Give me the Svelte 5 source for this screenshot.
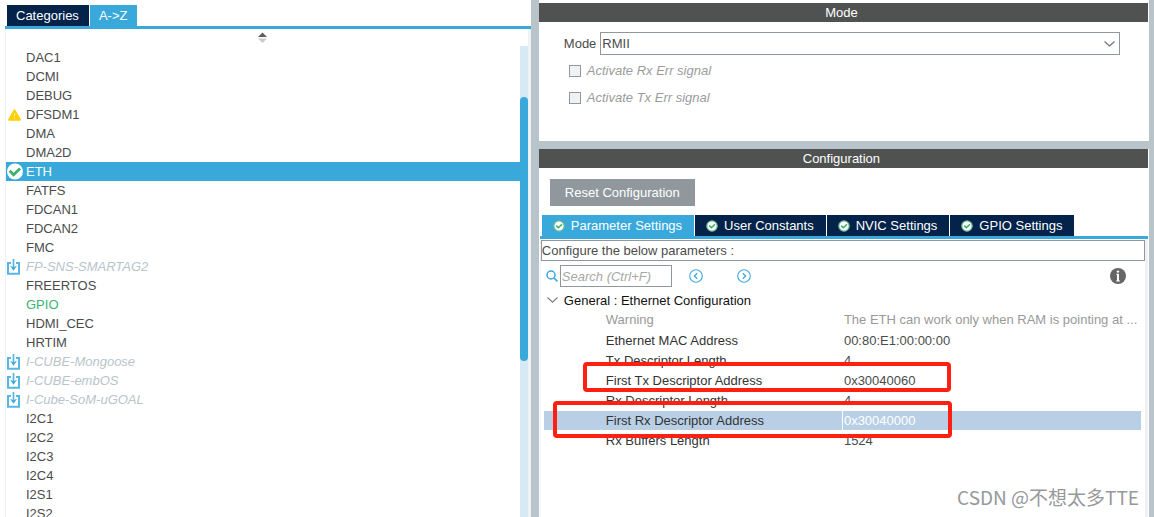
<script lang="ts">
    type Status = "none" | "warning" | "ok" | "download";

    interface Peripheral {
        name: string;
        status?: Status;
        configured?: boolean;
    }

    const peripherals: Peripheral[] = [
        { name: "DAC1" },
        { name: "DCMI" },
        { name: "DEBUG" },
        { name: "DFSDM1", status: "warning" },
        { name: "DMA" },
        { name: "DMA2D" },
        { name: "ETH", status: "ok" },
        { name: "FATFS" },
        { name: "FDCAN1" },
        { name: "FDCAN2" },
        { name: "FMC" },
        { name: "FP-SNS-SMARTAG2", status: "download" },
        { name: "FREERTOS" },
        { name: "GPIO", configured: true },
        { name: "HDMI_CEC" },
        { name: "HRTIM" },
        { name: "I-CUBE-Mongoose", status: "download" },
        { name: "I-CUBE-embOS", status: "download" },
        { name: "I-Cube-SoM-uGOAL", status: "download" },
        { name: "I2C1" },
        { name: "I2C2" },
        { name: "I2C3" },
        { name: "I2C4" },
        { name: "I2S1" },
        { name: "I2S2" },
    ];

    const listTabs = ["Categories", "A->Z"];
    const configTabs = [
        "Parameter Settings",
        "User Constants",
        "NVIC Settings",
        "GPIO Settings",
    ];
    const signals = ["Activate Rx Err signal", "Activate Tx Err signal"];

    const parameters = [
        {
            name: "Warning",
            value: "The ETH can work only when RAM is pointing at ...",
            disabled: true,
        },
        { name: "Ethernet MAC Address", value: "00:80:E1:00:00:00" },
        { name: "Tx Descriptor Length", value: "4" },
        { name: "First Tx Descriptor Address", value: "0x30040060" },
        { name: "Rx Descriptor Length", value: "4" },
        { name: "First Rx Descriptor Address", value: "0x30040000" },
        { name: "Rx Buffers Length", value: "1524" },
    ];

    let listTab = $state("A->Z");
    let configTab = $state("Parameter Settings");
    let selected = $state("ETH");
    let selectedParam = $state("First Rx Descriptor Address");
    let mode = $state("RMII");
    let search = $state("");
    let open = $state(true);
</script>

<div class="app">
    <aside class="list-panel">
        <div class="tabs">
            {#each listTabs as tab}
                <button class="tab" class:active={tab === listTab} onclick={() => (listTab = tab)}>
                    {tab}
                </button>
            {/each}
        </div>

        <div class="list-body">
            <div class="list">
                <button class="sort" aria-label="Sort">
                    <svg width="9" height="11" viewBox="0 0 9 11">
                        <path d="M4.5 0.5 L9 5 H0 Z" fill="#5c5f5e" />
                        <path d="M0 6.5 H9 L4.5 11 Z" fill="#c9cbcb" />
                    </svg>
                </button>
                <ul>
                    {#each peripherals as p}
                        <li>
                            <button
                                class="item"
                                class:selected={p.name === selected}
                                class:missing={p.status === "download"}
                                class:configured={p.configured}
                                onclick={() => (selected = p.name)}
                            >
                                <span class="status">
                                    {#if p.status === "warning"}
                                        <svg width="14" height="12" viewBox="0 0 14 12">
                                            <path
                                                d="M7.5 1.2 L13 10.8 H2 Z"
                                                fill="#ffd000"
                                                stroke="#ffd000"
                                                stroke-width="1.8"
                                                stroke-linejoin="round"
                                            />
                                            <path d="M7.5 4 V7.6 M7.5 8.8 V10" stroke="#fff2b0" stroke-width="1.1" />
                                        </svg>
                                    {:else if p.status === "ok"}
                                        <svg width="16" height="17" viewBox="0 0 16 17">
                                            <circle cx="8" cy="8.5" r="8" fill="#fff" />
                                            <path d="M2.6 7.8 L6.6 11.8 L13 5.4" fill="none" stroke="#3fae6e" stroke-width="2.8" />
                                        </svg>
                                    {:else if p.status === "download"}
                                        <svg width="13" height="16" viewBox="0 0 13 16">
                                            <path d="M4 4 H1 V14.8 H12 V4 H9" fill="none" stroke="#58b7e2" stroke-width="2" />
                                            <path d="M6.5 0 V8.5" stroke="#58b7e2" stroke-width="1.7" />
                                            <path d="M3 6.8 L6.5 11.8 L10 6.8 L6.5 8.2 Z" fill="#39a9dc" />
                                        </svg>
                                    {/if}
                                </span>
                                {p.name}
                            </button>
                        </li>
                    {/each}
                </ul>
            </div>
            <div class="scrollbar"><div class="thumb"></div></div>
        </div>
    </aside>

    <main class="main">
        <section class="mode">
            <h2>Mode</h2>
            <div class="mode-body">
                <div class="mode-row">
                    <label for="mode">Mode</label>
                    <div class="select">
                        <select id="mode" bind:value={mode}>
                            <option>Disable</option>
                            <option>MII</option>
                            <option>RMII</option>
                        </select>
                        <svg width="11" height="6" viewBox="0 0 11 6">
                            <path d="M0.5 0.5 L5.5 5 L10.5 0.5" fill="none" stroke="#6d6f6f" stroke-width="1.1" />
                        </svg>
                    </div>
                </div>
                {#each signals as signal}
                    <label class="check">
                        <input type="checkbox" disabled />
                        {signal}
                    </label>
                {/each}
            </div>
        </section>

        <section class="config">
            <h2>Configuration</h2>
            <div class="config-body">
                <button class="reset">Reset Configuration</button>

                <div class="tabs config-tabs">
                    {#each configTabs as tab}
                        <button class="tab" class:active={tab === configTab} onclick={() => (configTab = tab)}>
                            <svg width="12" height="12" viewBox="0 0 12 12">
                                <circle cx="6" cy="6" r="5.2" fill="#fff" stroke="#65b98a" stroke-width="1.2" />
                                <path d="M3.2 5.6 L5.4 7.8 L9 4.2" fill="none" stroke="#3fa76d" stroke-width="1.5" />
                            </svg>
                            {tab}
                        </button>
                    {/each}
                </div>

                <div class="params">
                    <p class="hint">Configure the below parameters :</p>

                    <div class="toolbar">
                        <label class="search-icon" for="search" aria-label="Search">
                            <svg width="12" height="12" viewBox="0 0 12 12">
                                <circle cx="5" cy="5" r="4" fill="none" stroke="#39a9dc" stroke-width="1.5" />
                                <path d="M8 8 L11.4 11.4" stroke="#39a9dc" stroke-width="1.7" />
                            </svg>
                        </label>
                        <input id="search" type="text" placeholder="Search (Ctrl+F)" bind:value={search} />
                        <button class="icon" aria-label="Previous match">
                            <svg width="14" height="14" viewBox="0 0 14 14" fill="none" stroke="#39a9dc">
                                <circle cx="7" cy="7" r="6.3" stroke-width="1.1" />
                                <path d="M8.2 4.2 L5.4 7 L8.2 9.8" stroke-width="1.3" />
                            </svg>
                        </button>
                        <button class="icon next" aria-label="Next match">
                            <svg width="14" height="14" viewBox="0 0 14 14" fill="none" stroke="#39a9dc">
                                <circle cx="7" cy="7" r="6.3" stroke-width="1.1" />
                                <path d="M5.8 4.2 L8.6 7 L5.8 9.8" stroke-width="1.3" />
                            </svg>
                        </button>
                        <button class="icon info" aria-label="Information">
                            <svg width="16" height="16" viewBox="0 0 16 16">
                                <circle cx="8" cy="8" r="8" fill="#666" />
                                <path d="M6.4 6.3 H8 V12.6 M6.2 13 H9.8" fill="none" stroke="#fff" stroke-width="1.2" />
                                <path d="M8 6 V13" stroke="#fff" stroke-width="2" />
                                <circle cx="8" cy="3.6" r="1.2" fill="#fff" />
                            </svg>
                        </button>
                    </div>

                    <div class="tree">
                        <button class="group" onclick={() => (open = !open)}>
                            <svg width="11" height="6" viewBox="0 0 11 6">
                                <path d="M0.5 0.5 L5.5 5.2 L10.5 0.5" fill="none" stroke="#7b7d7d" stroke-width="1.1" />
                            </svg>
                            General : Ethernet Configuration
                        </button>
                        {#if open}
                            <table>
                                <tbody>
                                    {#each parameters as p}
                                        <tr
                                            class:disabled={p.disabled}
                                            class:selected={p.name === selectedParam}
                                            onclick={() => (selectedParam = p.name)}
                                        >
                                            <th scope="row">{p.name}</th>
                                            <td>{p.value}</td>
                                        </tr>
                                    {/each}
                                </tbody>
                            </table>
                            <div class="mark tx"></div>
                            <div class="mark rx"></div>
                        {/if}
                    </div>
                </div>
            </div>
        </section>
    </main>

    <div class="watermark">CSDN @不想太多TTE</div>
</div>

<style>
    :global(body) {
        margin: 0;
        background: #fff;
    }

    .app {
        position: relative;
        display: flex;
        height: 100vh;
        overflow: hidden;
        font-family: "Liberation Sans", Arial, sans-serif;
        font-size: 13px;
        color: #4a4c4c;
    }

    button,
    input,
    select {
        margin: 0;
        padding: 0;
        border: none;
        border-radius: 0;
        background: none;
        font: inherit;
        color: inherit;
        box-sizing: border-box;
    }

    svg {
        display: block;
        flex: none;
    }

    /* tabs */
    .tabs {
        display: flex;
        gap: 1px;
        padding-left: 2px;
        border-bottom: 3px solid #39a9dc;
    }

    .tab {
        display: flex;
        align-items: center;
        gap: 6px;
        height: 21px;
        padding: 0 10px 0 9px;
        background: #03234b;
        color: #fff;
        white-space: nowrap;
    }

    .tab.active {
        background: #39a9dc;
    }

    /* peripheral list */
    .list-panel {
        flex: 0 0 46%;
        display: flex;
        flex-direction: column;
        box-sizing: border-box;
        padding: 5px 0 0 5px;
        min-width: 0;
    }

    .list-body {
        flex: 1;
        display: flex;
        min-height: 0;
        border-left: 1px solid #f0f1f3;
        border-right: 3px solid #f0f1f3;
    }

    .list {
        flex: 1;
        overflow: hidden;
    }

    .sort {
        display: block;
        height: 19px;
        margin: 0 auto;
        padding-bottom: 2px;
    }

    ul {
        margin: 0;
        padding: 0;
        list-style: none;
    }

    .item {
        display: flex;
        align-items: center;
        width: 100%;
        height: 19px;
        padding-left: 1px;
        text-align: left;
    }

    .item.selected {
        background: #39a9dc;
        color: #fff;
    }

    .item.missing {
        color: #b8c4ca;
        font-style: italic;
    }

    .item.configured {
        color: #3cb371;
    }

    .status {
        width: 16px;
        margin-right: 3px;
    }

    .scrollbar {
        width: 8px;
        margin-top: 17px;
        background: #d8e9f6;
    }

    .thumb {
        height: 56%;
        margin-top: 51px;
        border-radius: 4px;
        background: #39a9dc;
    }

    /* right side */
    .main {
        flex: 1;
        display: flex;
        flex-direction: column;
        gap: 8px;
        min-width: 0;
        border-left: 8px solid #b8c4ca;
        border-right: 5px solid #b8c4ca;
        background: #b8c4ca;
    }

    section {
        background: #fff;
    }

    h2 {
        margin: 0 1px 0 0;
        padding-right: 4px;
        background: #4f5251;
        color: #fff;
        font-size: 13px;
        font-weight: normal;
        line-height: 19px;
        text-align: center;
    }

    .mode {
        padding-top: 3px;
    }

    .mode-body {
        display: flex;
        flex-direction: column;
        padding: 10px 29px 30px 25px;
    }

    .mode-row {
        display: flex;
        align-items: center;
        gap: 4px;
        margin-bottom: 2px;
    }

    .select {
        position: relative;
        flex: 1;
    }

    .select select {
        display: block;
        width: 100%;
        height: 23px;
        padding-left: 1px;
        border: 1px solid #90989e;
        background: #fff;
        appearance: none;
    }

    .select svg {
        position: absolute;
        top: 9px;
        right: 5px;
        pointer-events: none;
    }

    .check {
        display: flex;
        align-items: center;
        gap: 6px;
        height: 27px;
        padding-left: 5px;
        color: #9a9c9c;
        font-style: italic;
    }

    .check input {
        width: 12px;
        height: 12px;
        border: 1px solid #90989e;
        background: #f0f1f3;
        appearance: none;
    }

    .config {
        flex: 1;
        display: flex;
        flex-direction: column;
        min-height: 0;
    }

    .config-body {
        flex: 1;
        display: flex;
        flex-direction: column;
        padding: 11px 1px 0 1px;
    }

    .reset {
        align-self: flex-start;
        height: 27px;
        margin: 0 0 9px 10px;
        padding: 0 15px;
        background: #90989e;
        color: #fff;
    }

    .config-tabs .tab {
        padding: 0 12px 0 11px;
    }

    .params {
        flex: 1;
        border-left: 1px solid #f0f1f3;
        border-right: 3px solid #f0f1f3;
    }

    .hint {
        margin: 1px 0 0;
        border: 1px solid #90989e;
        line-height: 19px;
    }

    .toolbar {
        display: flex;
        align-items: center;
        padding: 4px 19px 3px 5px;
    }

    .search-icon {
        margin-right: 2px;
    }

    .toolbar input {
        width: 112px;
        height: 22px;
        margin-right: 17px;
        padding: 0 1px;
        border: 1px solid #90989e;
    }

    .toolbar input::placeholder {
        color: #a6a8a8;
        font-style: italic;
        opacity: 1;
    }

    .icon.next {
        margin-left: 34px;
    }

    .icon.info {
        margin-left: auto;
    }

    .tree {
        position: relative;
        margin: 0 4px 0 3px;
    }

    .group {
        display: flex;
        align-items: center;
        gap: 6px;
        height: 20px;
        padding-left: 3px;
        color: #111;
    }

    table {
        width: 100%;
        table-layout: fixed;
        border-collapse: collapse;
    }

    th,
    td {
        box-sizing: border-box;
        width: 50%;
        height: 20px;
        padding: 0 0 0 1px;
        border-bottom: 1px solid #fff;
        line-height: 19px;
        font-weight: normal;
        text-align: left;
        white-space: nowrap;
    }

    th {
        padding-left: 62px;
        border-right: 1px solid #fff;
        color: #333;
    }

    .disabled th,
    .disabled td {
        color: #999;
    }

    .selected th,
    .selected td {
        background: #b8cfe5;
    }

    .selected td {
        color: #fff;
    }

    /* red frames over the address rows */
    .mark {
        position: absolute;
        box-sizing: border-box;
        border: 4px solid #ff2012;
        border-radius: 4px;
        pointer-events: none;
    }

    .mark.tx {
        top: 72px;
        left: 39px;
        width: 368px;
        height: 30px;
    }

    .mark.rx {
        top: 111px;
        left: 9px;
        width: 399px;
        height: 37px;
    }

    .watermark {
        position: absolute;
        right: 15px;
        bottom: 6px;
        color: #96989a;
        font-family: "Noto Sans CJK SC", sans-serif;
        font-size: 19px;
        line-height: 28px;
    }
</style>
